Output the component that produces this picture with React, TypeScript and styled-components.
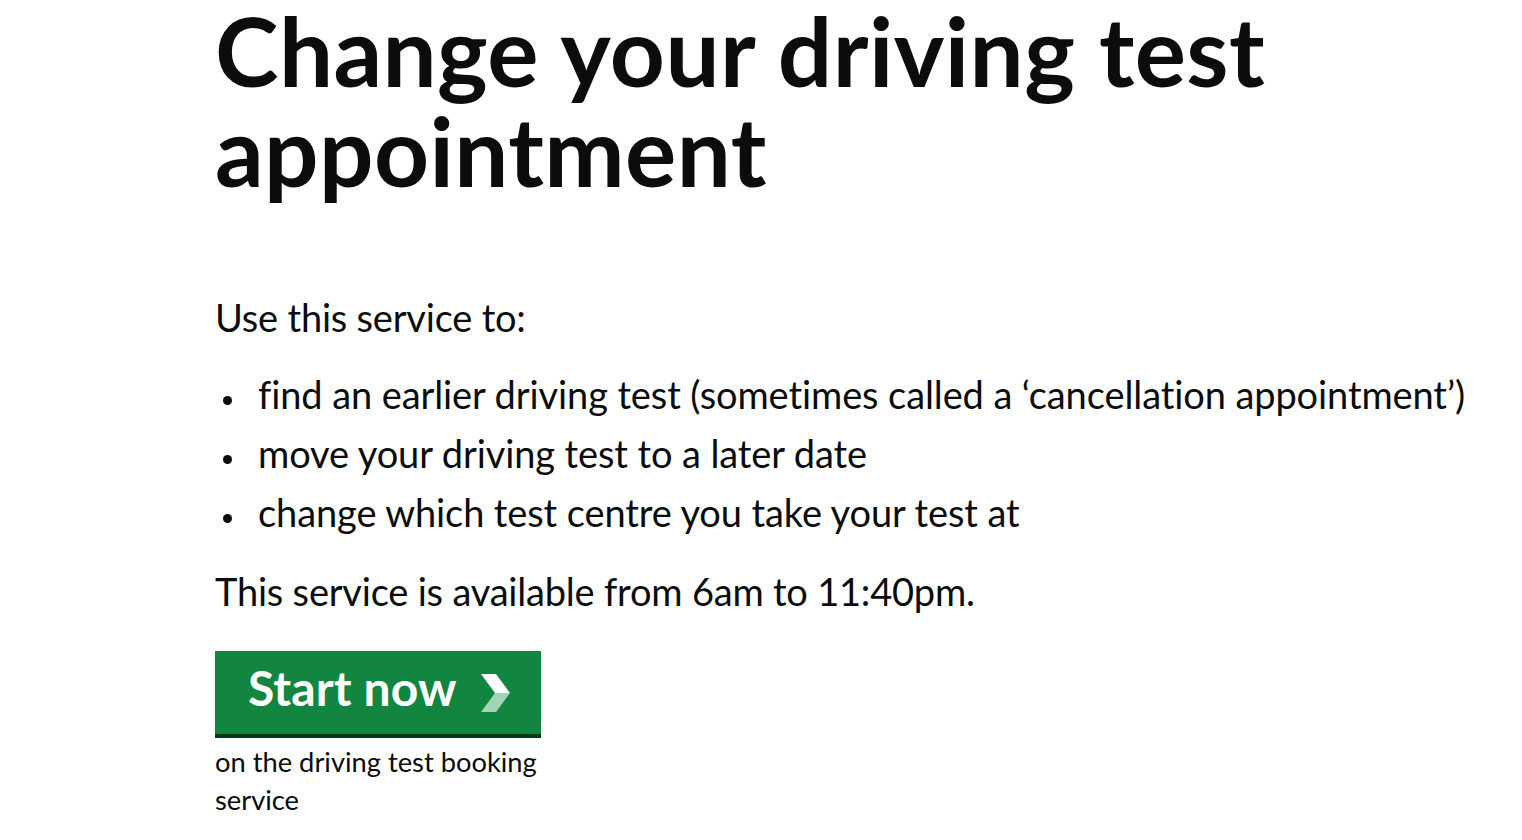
import React from "react";
import styled, { createGlobalStyle } from "styled-components";

const GlobalStyle = createGlobalStyle`
  html, body {
    margin: 0;
    padding: 0;
    background: #ffffff;
  }
  body {
    font-family: Lato, "Noto Sans", sans-serif;
    color: #0b0c0c;
    -webkit-font-smoothing: antialiased;
  }
`;

const Main = styled.main`
  display: flex;
  flex-direction: column;
  align-items: flex-start;
  padding: 0 0 0 215px;
  width: 1290px;
`;

const Heading = styled.h1`
  margin: 0 0 92px;
  max-width: 1100px;
  font-family: Lato, sans-serif;
  font-weight: 700;
  font-size: 96px;
  line-height: 100px;
  letter-spacing: 0.4px;
  color: #0b0c0c;
`;

const Body = styled.p<{ $gap?: number }>`
  margin: 0 0 ${(p) => p.$gap ?? 0}px;
  font-family: Lato, sans-serif;
  font-size: 38px;
  line-height: 50px;
  font-weight: 400;
  letter-spacing: -0.2px;
  color: #0b0c0c;
`;

const List = styled.ul`
  display: flex;
  flex-direction: column;
  gap: 9px;
  margin: 0 0 29px;
  padding: 0;
  list-style: none;
`;

const Item = styled.li`
  display: flex;
  align-items: flex-start;
  font-family: Lato, sans-serif;
  font-size: 38px;
  line-height: 50px;
  letter-spacing: -0.1px;
  color: #0b0c0c;
`;

const Dot = styled.span`
  flex-shrink: 0;
  width: 9px;
  height: 9px;
  margin: 27px 26px 0 8px;
  border-radius: 50%;
  background: #0b0c0c;
`;

const StartBlock = styled.div`
  display: flex;
  flex-direction: column;
  width: 326px;
`;

const StartButton = styled.a`
  display: flex;
  align-items: flex-start;
  gap: 24px;
  box-sizing: border-box;
  width: 326px;
  height: 83px;
  padding: 13px 0 0 33px;
  background: #128540;
  box-shadow: 0 4px 0 #003a1b;
  color: #ffffff;
  text-decoration: none;
  white-space: nowrap;
  font-family: Lato, sans-serif;
  font-weight: 700;
  font-size: 48px;
  line-height: 48px;
  letter-spacing: 0.1px;
  cursor: pointer;
`;

const Arrow = styled.svg`
  flex-shrink: 0;
  width: 29px;
  height: 38px;
  margin-top: 10px;
`;

const Caption = styled.p`
  margin: 9px 0 0;
  font-family: Lato, sans-serif;
  font-size: 27.3px;
  line-height: 38px;
  color: #0b0c0c;
`;

const items = [
  "find an earlier driving test (sometimes called a ‘cancellation appointment’)",
  "move your driving test to a later date",
  "change which test centre you take your test at",
];

export default function App() {
  return (
    <>
      <GlobalStyle />
      <Main>
        <Heading>Change your driving test appointment</Heading>
        <Body $gap={27}>Use this service to:</Body>
        <List>
          {items.map((t) => (
            <Item key={t}>
              <Dot />
              <span>{t}</span>
            </Item>
          ))}
        </List>
        <Body $gap={35}>This service is available from 6am to 11:40pm.</Body>
        <StartBlock>
          <StartButton href="#" role="button">
            <span>Start now</span>
            <Arrow viewBox="0 0 29 38" aria-hidden="true">
              <polygon points="0,0 15,0 29,19 14,19" fill="#ffffff" />
              <polygon points="14,19 29,19 15,38 0,38" fill="#a3d4b6" />
            </Arrow>
          </StartButton>
          <Caption>on the driving test booking service</Caption>
        </StartBlock>
      </Main>
    </>
  );
}
